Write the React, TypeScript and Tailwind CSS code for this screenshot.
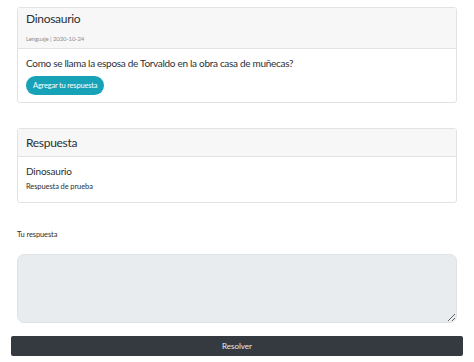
export default function App() {
  return (
    <div className="min-h-screen bg-white font-['Lato',sans-serif] text-[#2b2f33]">
      <div className="px-[17px] pt-[7px]">
        {/* Pregunta */}
        <div className="border border-[#e3e3e3] rounded-[3px]">
          <div className="bg-[#f7f7f7] border-b border-[#e3e3e3] px-[8px] pt-[3px] pb-[4px]">
            <h1 className="text-[12px] leading-[16px] tracking-[-0.3px]">Dinosaurio</h1>
            <p className="text-[6px] leading-[10px] mt-[7px] text-[#8a8f94] tracking-[-0.1px]">Lenguaje | 2020-10-24</p>
          </div>
          <div className="px-[8px] pt-[7px] pb-[7px]">
            <p className="text-[10px] leading-[14px] tracking-[-0.3px]">Como se llama la esposa de Torvaldo en la obra casa de muñecas?</p>
            <button className="mt-[4px] h-[19px] px-[7px] rounded-full bg-[#17a2b8] text-white text-[7.5px] tracking-[-0.2px]">
              Agregar tu respuesta
            </button>
          </div>
        </div>

        {/* Respuestas */}
        <div className="mt-[25px] border border-[#e3e3e3] rounded-[3px]">
          <div className="bg-[#f7f7f7] border-b border-[#e3e3e3] px-[8px] h-[28px] flex items-center">
            <h2 className="text-[12px] tracking-[-0.3px]">Respuesta</h2>
          </div>
          <div className="px-[8px] pt-[7px] pb-[10px]">
            <p className="text-[10px] leading-[14px] tracking-[-0.2px]">Dinosaurio</p>
            <p className="text-[7.5px] leading-[10px] mt-[4px] tracking-[-0.1px]">Respuesta de prueba</p>
          </div>
        </div>

        {/* Formulario */}
        <label className="block mt-[27px] text-[7.5px] leading-[10px] tracking-[-0.1px]">Tu respuesta</label>
        <textarea className="block mt-[14px] w-full h-[69px] rounded-[7px] bg-[#e9ecef] border border-[#e0e3e6] outline-none" />
      </div>
      <div className="px-[11px] pt-[13px]">
        <button className="block w-full h-[20px] rounded-[2px] bg-[#343a40] text-[#e9ecef] text-[8px]">Resolver</button>
      </div>
    </div>
  )
}
